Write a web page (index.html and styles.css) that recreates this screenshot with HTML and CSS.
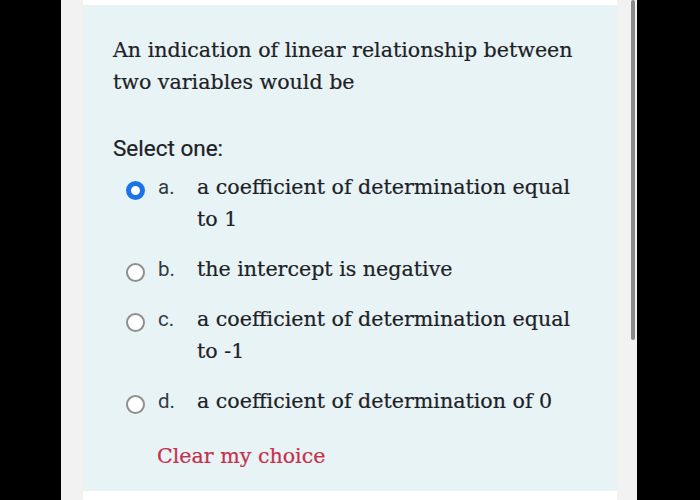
FILE: index.html
```html
<!DOCTYPE html>
<html>
<head>
<meta charset="utf-8">
<link rel="stylesheet" href="styles.css">
</head>
<body>
<div class="screen">
  <div class="page">
    <div class="formulation">
      <div class="qtext">An indication of linear relationship between two variables would be</div>
      <div class="prompt">Select one:</div>
      <div class="answers">
        <div class="option">
          <span class="radio checked"></span>
          <span class="letter">a.</span>
          <span class="text">a coefficient of determination equal to 1</span>
        </div>
        <div class="option">
          <span class="radio"></span>
          <span class="letter">b.</span>
          <span class="text">the intercept is negative</span>
        </div>
        <div class="option">
          <span class="radio"></span>
          <span class="letter">c.</span>
          <span class="text">a coefficient of determination equal to -1</span>
        </div>
        <div class="option">
          <span class="radio"></span>
          <span class="letter">d.</span>
          <span class="text">a coefficient of determination of 0</span>
        </div>
      </div>
      <div class="clear">Clear my choice</div>
    </div>
  </div>
  <div class="scrollbar"></div>
</div>
</body>
</html>
```
FILE: styles.css
```css
html, body {
  margin: 0;
  padding: 0;
  background: #000;
  height: 500px;
  overflow: hidden;
}
.screen {
  position: relative;
  margin-left: 61px;
  width: 576px;
  height: 500px;
  background: #f2f2f2;
  display: flex;
}
.page {
  margin-left: 22px;
  width: 534px;
  height: 500px;
  background: #ffffff;
  padding-top: 5px;
  box-sizing: border-box;
}
.formulation {
  background: #e7f3f5;
  height: 486px;
  box-sizing: border-box;
  padding: 29px 30px 0 30px;
  color: #1d2125;
  font-family: "DejaVu Serif", "Liberation Serif", serif;
  font-size: 20.6px;
  line-height: 32px;
  -webkit-text-stroke: 0.2px #1d2125;
}
.qtext {
  width: 480px;
}
.prompt {
  margin-top: 34px;
  font-family: Roboto, "Liberation Sans", sans-serif;
  font-size: 22.5px;
  line-height: 32px;
}
.answers {
  margin-top: 7px;
  display: flex;
  flex-direction: column;
  gap: 18px;
}
.option {
  display: flex;
  align-items: flex-start;
}
.radio {
  flex: none;
  width: 19px;
  height: 19px;
  box-sizing: border-box;
  border-radius: 50%;
  border: 2px solid #8f8f8f;
  background: #fff;
  margin: 10px 0 0 13px;
}
.radio.checked {
  border: 5.5px solid #1a73e8;
}
.letter {
  flex: none;
  width: 39px;
  margin-left: 13px;
  font-family: Roboto, "Liberation Sans", sans-serif;
  font-size: 20.5px;
  color: #343a40;
  -webkit-text-stroke: 0;
}
.text {
  width: 390px;
}
.clear {
  margin-top: 23px;
  margin-left: 44px;
  color: #c4314b;
  -webkit-text-stroke: 0.2px #c4314b;
}
.scrollbar {
  position: absolute;
  left: 570px;
  top: 0;
  width: 4px;
  height: 340px;
  border-radius: 2px;
  background: #8a8a8a;
}
```
